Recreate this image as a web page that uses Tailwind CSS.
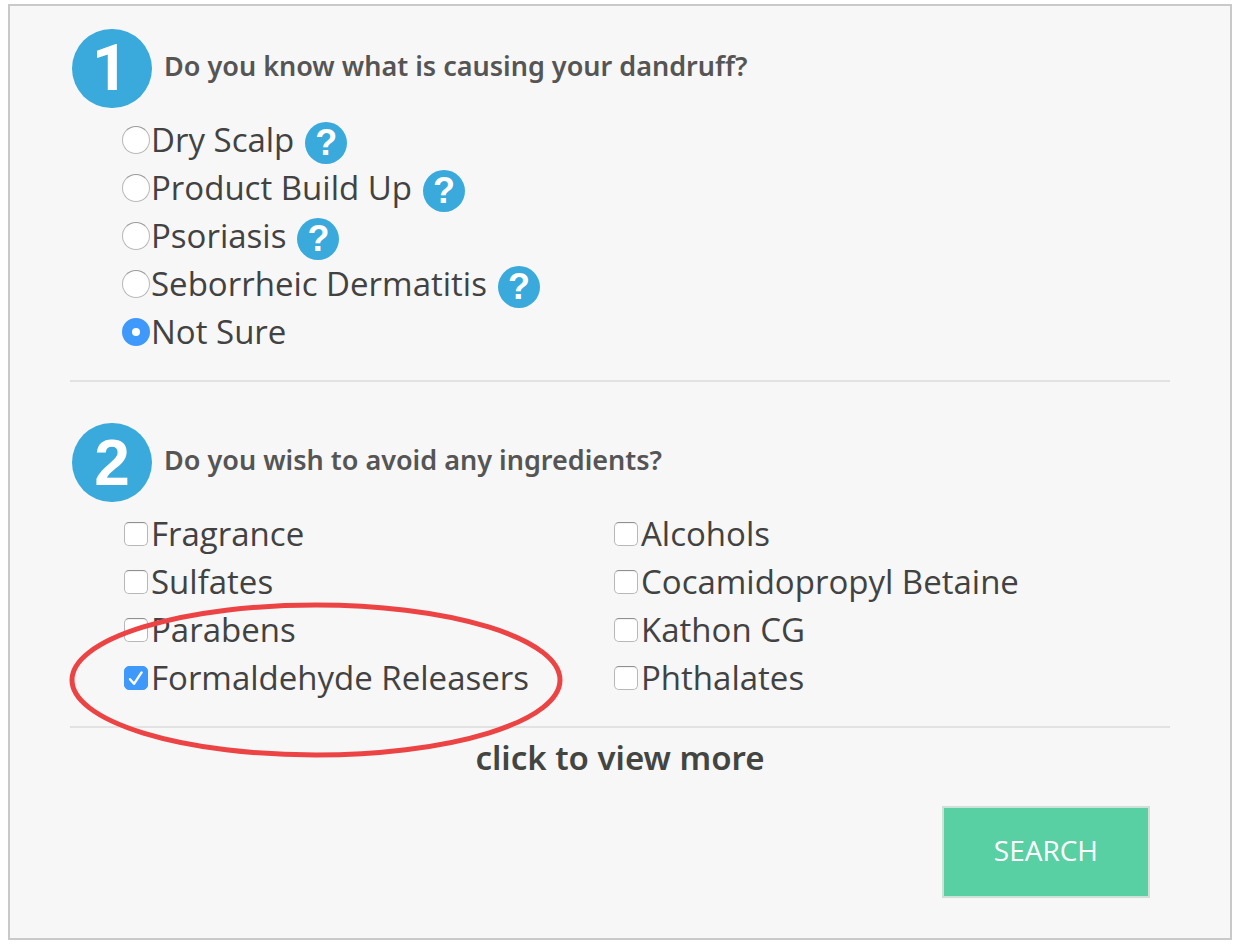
<!DOCTYPE html>
<html lang="en">
<head>
  <meta charset="UTF-8" />
  <meta name="viewport" content="width=device-width, initial-scale=1.0" />
  <title>Dandruff Product Finder</title>
  <script src="https://cdn.jsdelivr.net/npm/@tailwindcss/browser@4"></script>
</head>
<body class="bg-white px-2 pt-1 pb-2 font-['Open_Sans','Noto_Sans',sans-serif] text-[33px] leading-[48px] text-[#424242]">

  <form class="border-2 border-[#c9c9c9] bg-[#f7f7f7] px-[60px] pt-[22px] pb-10">

    <!-- Question 1 -->
    <section aria-labelledby="q1">
      <div class="flex h-20 items-end gap-3 pl-[2px]">
        <span class="flex h-[79px] w-20 shrink-0 items-center justify-center rounded-full bg-[#3aa9db] pr-1 font-['Roboto',sans-serif] text-[64px] font-bold text-white">1</span>
        <h2 id="q1" class="pb-[18px] font-['Noto_Sans',sans-serif] text-[27px] font-semibold text-[#555555]">Do you know what is causing your dandruff?</h2>
      </div>

      <div class="mt-2 pl-[52px]">
        <div class="flex h-12 items-center gap-[11px]">
          <label class="flex items-center gap-px">
            <input type="radio" name="cause" class="size-7 appearance-none rounded-full border border-[#b8b8b8] border-t-[#9a9a9a] bg-white checked:border-[10px] checked:border-[#3f99fb]" />
            Dry Scalp
          </label>
          <button type="button" aria-label="About dry scalp" class="mt-[6px] flex size-[42px] items-center justify-center rounded-full bg-[#3aa9db] font-['Liberation_Sans',sans-serif] text-[36px] font-bold text-white">?</button>
        </div>
        <div class="flex h-12 items-center gap-[11px]">
          <label class="flex items-center gap-px">
            <input type="radio" name="cause" class="size-7 appearance-none rounded-full border border-[#b8b8b8] border-t-[#9a9a9a] bg-white checked:border-[10px] checked:border-[#3f99fb]" />
            Product Build Up
          </label>
          <button type="button" aria-label="About product build up" class="mt-[6px] flex size-[42px] items-center justify-center rounded-full bg-[#3aa9db] font-['Liberation_Sans',sans-serif] text-[36px] font-bold text-white">?</button>
        </div>
        <div class="flex h-12 items-center gap-[11px]">
          <label class="flex items-center gap-px">
            <input type="radio" name="cause" class="size-7 appearance-none rounded-full border border-[#b8b8b8] border-t-[#9a9a9a] bg-white checked:border-[10px] checked:border-[#3f99fb]" />
            Psoriasis
          </label>
          <button type="button" aria-label="About psoriasis" class="mt-[6px] flex size-[42px] items-center justify-center rounded-full bg-[#3aa9db] font-['Liberation_Sans',sans-serif] text-[36px] font-bold text-white">?</button>
        </div>
        <div class="flex h-12 items-center gap-[11px]">
          <label class="flex items-center gap-px">
            <input type="radio" name="cause" class="size-7 appearance-none rounded-full border border-[#b8b8b8] border-t-[#9a9a9a] bg-white checked:border-[10px] checked:border-[#3f99fb]" />
            Seborrheic Dermatitis
          </label>
          <button type="button" aria-label="About seborrheic dermatitis" class="mt-[6px] flex size-[42px] items-center justify-center rounded-full bg-[#3aa9db] font-['Liberation_Sans',sans-serif] text-[36px] font-bold text-white">?</button>
        </div>
        <div class="flex h-12 items-center gap-[11px]">
          <label class="flex items-center gap-px">
            <input type="radio" name="cause" checked class="size-7 appearance-none rounded-full border border-[#b8b8b8] border-t-[#9a9a9a] bg-white checked:border-[10px] checked:border-[#3f99fb]" />
            Not Sure
          </label>
        </div>
      </div>
    </section>

    <hr class="mt-6 mb-10 border-t-2 border-[#e2e2e2]" />

    <!-- Question 2 -->
    <section aria-labelledby="q2">
      <div class="flex h-20 items-end gap-3 pl-[2px]">
        <span class="flex h-[79px] w-20 shrink-0 items-center justify-center rounded-full bg-[#3aa9db] font-['Liberation_Sans',sans-serif] text-[64px] font-bold text-white">2</span>
        <h2 id="q2" class="pb-[18px] font-['Noto_Sans',sans-serif] text-[27px] font-semibold text-[#555555]">Do you wish to avoid any ingredients?</h2>
      </div>

      <div class="mt-2 grid grid-cols-2 pr-[68px] pl-[52px]">
        <div>
          <label class="flex h-12 items-center gap-px">
            <input type="checkbox" class="mx-[2px] size-6 appearance-none rounded-[5px] border border-[#b8b8b8] border-t-[#8f8f8f] bg-white inset-shadow-xs" />
            Fragrance
          </label>
          <label class="flex h-12 items-center gap-px">
            <input type="checkbox" class="mx-[2px] size-6 appearance-none rounded-[5px] border border-[#b8b8b8] border-t-[#8f8f8f] bg-white inset-shadow-xs" />
            Sulfates
          </label>
          <label class="flex h-12 items-center gap-px">
            <input type="checkbox" class="mx-[2px] size-6 appearance-none rounded-[5px] border border-[#b8b8b8] border-t-[#8f8f8f] bg-white inset-shadow-xs" />
            Parabens
          </label>
          <div class="relative">
            <label class="flex h-12 items-center gap-px">
              <span class="mx-[2px] grid size-6">
                <input type="checkbox" checked class="peer col-start-1 row-start-1 size-6 appearance-none rounded-[5px] border border-[#b8b8b8] bg-white checked:border-[#3f99fb] checked:bg-[#3f99fb]" />
                <svg class="pointer-events-none invisible col-start-1 row-start-1 size-6 peer-checked:visible" viewBox="0 0 24 24" fill="none" stroke="#fff" stroke-width="2.4" stroke-linecap="round" stroke-linejoin="round">
                  <path d="M6 13.2 L10 17.8 L17.6 6.4" />
                </svg>
              </span>
              Formaldehyde Releasers
            </label>
            <!-- highlight ring -->
            <svg class="pointer-events-none absolute top-[-52px] left-[-53px] h-[156px] w-[494px] max-w-none" viewBox="0 0 494 156" fill="none" stroke="#ec4444" stroke-width="5">
              <ellipse cx="247" cy="78" rx="244" ry="75" />
            </svg>
          </div>
        </div>
        <div>
          <label class="flex h-12 items-center gap-px">
            <input type="checkbox" class="mx-[2px] size-6 appearance-none rounded-[5px] border border-[#b8b8b8] border-t-[#8f8f8f] bg-white inset-shadow-xs" />
            Alcohols
          </label>
          <label class="flex h-12 items-center gap-px">
            <input type="checkbox" class="mx-[2px] size-6 appearance-none rounded-[5px] border border-[#b8b8b8] border-t-[#8f8f8f] bg-white inset-shadow-xs" />
            Cocamidopropyl Betaine
          </label>
          <label class="flex h-12 items-center gap-px">
            <input type="checkbox" class="mx-[2px] size-6 appearance-none rounded-[5px] border border-[#b8b8b8] border-t-[#8f8f8f] bg-white inset-shadow-xs" />
            Kathon CG
          </label>
          <label class="flex h-12 items-center gap-px">
            <input type="checkbox" class="mx-[2px] size-6 appearance-none rounded-[5px] border border-[#b8b8b8] border-t-[#8f8f8f] bg-white inset-shadow-xs" />
            Phthalates
          </label>
        </div>
      </div>
    </section>

    <hr class="mt-6 border-t-2 border-[#e2e2e2]" />

    <div class="mt-[6px] text-center">
      <a href="#" class="font-['Noto_Sans',sans-serif] font-semibold text-[#434543]">click to view more</a>
    </div>

    <div class="mt-6 flex justify-end pr-5">
      <button type="submit" class="border-2 border-[#cfe0d8] bg-[#58d0a3] px-[50px] pt-[18px] pb-[22px] text-[28px] text-white">SEARCH</button>
    </div>
  </form>

</body>
</html>
